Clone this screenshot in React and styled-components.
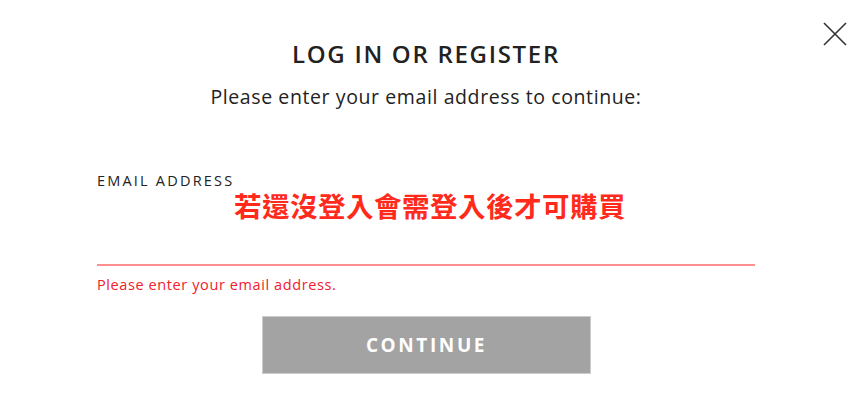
import React from "react";
import styled, { createGlobalStyle } from "styled-components";

const GlobalStyle = createGlobalStyle`
    * {
        box-sizing: border-box;
    }
    body {
        margin: 0;
        background: #ffffff;
        font-family: "Open Sans", "Lato", sans-serif;
        color: #222222;
    }
`;

export default function App() {
    return (
        <>
            <GlobalStyle />
            <Modal>
                <CloseButton aria-label="close">
                    <svg width="24" height="24" viewBox="0 0 24 24">
                        <path
                            d="M1 1 L23 23 M23 1 L1 23"
                            stroke="#333"
                            strokeWidth="1.6"
                            fill="none"
                        />
                    </svg>
                </CloseButton>
                <Title>LOG IN OR REGISTER</Title>
                <Subtitle>Please enter your email address to continue:</Subtitle>
                <Form>
                    <Label>EMAIL ADDRESS</Label>
                    <Notice>若還沒登入會需登入後才可購買</Notice>
                    <Input type="email" />
                    <ErrorText>Please enter your email address.</ErrorText>
                    <ContinueButton>CONTINUE</ContinueButton>
                </Form>
            </Modal>
        </>
    );
}

const Modal = styled.div`
    position: relative;
    width: 860px;
    height: 419px;
    padding-top: 38px;
    display: flex;
    flex-direction: column;
    align-items: center;
`;
const CloseButton = styled.button`
    position: absolute;
    top: 22px;
    right: 13px;
    border: none;
    background: none;
    padding: 0;
    cursor: pointer;
    display: flex;
`;
const Title = styled.h1`
    margin: 0;
    font-size: 24px;
    font-weight: 600;
    letter-spacing: 1.7px;
    line-height: 32px;
    color: #222;
    transform: translateX(-4px);
`;
const Subtitle = styled.p`
    margin: 14px 0 0;
    font-size: 19.5px;
    line-height: 26px;
    letter-spacing: 0.6px;
    color: #222;
    transform: translateX(-4px);
`;
const Form = styled.div`
    width: 658px;
    margin-top: 62px;
    display: flex;
    flex-direction: column;
    align-self: flex-start;
    margin-left: 97px;
`;
const Label = styled.label`
    font-size: 14.5px;
    letter-spacing: 2.2px;
    line-height: 18px;
    color: #222;
`;
const Notice = styled.div`
    margin-top: -2px;
    text-align: center;
    font-family: "Noto Sans CJK TC", sans-serif;
    font-size: 27.5px;
    font-weight: 700;
    line-height: 34px;
    color: #ff2a1c;
    letter-spacing: 0.5px;
    transform: translateX(4px);
`;
const Input = styled.input`
    margin-top: 18px;
    height: 26px;
    border: none;
    border-bottom: 2px solid #ff8e8e;
    outline: none;
    font-size: 16px;
    background: transparent;
`;
const ErrorText = styled.div`
    margin-top: 10px;
    font-size: 14.5px;
    line-height: 18px;
    color: #f0202c;
    letter-spacing: 0.6px;
`;
const ContinueButton = styled.button`
    margin-top: 22px;
    align-self: flex-start;
    margin-left: 165px;
    width: 329px;
    height: 58px;
    background: #a3a3a3;
    border: 1px solid #cccccc;
    color: #ffffff;
    font-family: "Open Sans", sans-serif;
    font-size: 19px;
    font-weight: 700;
    letter-spacing: 2.6px;
    cursor: pointer;
`;
